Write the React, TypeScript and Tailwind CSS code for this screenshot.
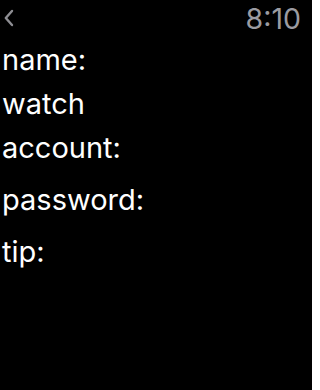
export default function App() {
  const rows = ["name:", "watch", "account:"];
  return (
    <div className="h-[390px] w-[312px] overflow-hidden bg-black font-['Inter',sans-serif] text-white">
      <div className="flex h-[38px] items-start justify-between pr-[11px]">
        <svg className="ml-[3px] mt-[9px]" width="11" height="18" viewBox="0 0 11 18" fill="none">
          <path d="M9 2 L2.8 9 L9 16" stroke="#8e8e93" strokeWidth="2.4" strokeLinecap="round" strokeLinejoin="round" />
        </svg>
        <span className="text-[28.5px] leading-[38px] text-[#9b9ba1]">8:10</span>
      </div>
      <div className="flex flex-col pl-[2px] text-[29px]">
        {rows.map((r) => (
          <div key={r} className="leading-[44px]">{r}</div>
        ))}
        <div className="mt-2 leading-[44px]">password:</div>
        <div className="mt-2 leading-[44px]">tip:</div>
      </div>
    </div>
  );
}
